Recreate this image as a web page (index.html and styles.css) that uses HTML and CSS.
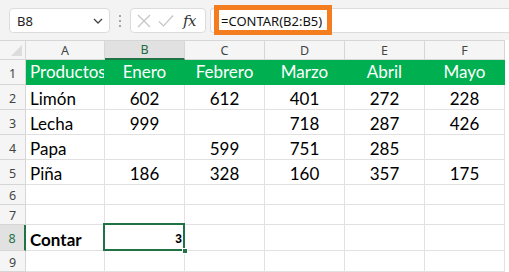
FILE: index.html
```html
<!DOCTYPE html>
<html lang="es">
<head>
<meta charset="utf-8">
<title>CONTAR</title>
<link rel="stylesheet" href="styles.css">
</head>
<body>
<div class="toolbar">
  <div class="namebox">
    <span class="name">B8</span>
    <svg class="chev" width="10" height="6" viewBox="0 0 10 6"><path d="M1 1 L5 5 L9 1" fill="none" stroke="#444" stroke-width="1.3"/></svg>
  </div>
  <div class="dots"><span></span><span></span><span></span></div>
  <div class="fxbox">
    <svg width="14" height="14" viewBox="0 0 14 14"><path d="M1 1 L13 13 M13 1 L1 13" stroke="#c4c4c4" stroke-width="1.2" fill="none"/></svg>
    <svg width="16" height="14" viewBox="0 0 16 14"><path d="M1 7.5 L5.5 12 L15 1.5" stroke="#c4c4c4" stroke-width="1.2" fill="none"/></svg>
    <span class="fx">fx</span>
  </div>
  <div class="formula">
    <span class="ftext">=CONTAR(B2:B5)</span>
    <span class="highlight"></span>
  </div>
</div>
<div class="sheet">
  <div class="corner"></div>
  <div class="ch">A</div>
  <div class="ch sel">B</div>
  <div class="ch">C</div>
  <div class="ch">D</div>
  <div class="ch">E</div>
  <div class="ch">F</div>

  <div class="rh">1</div>
  <div class="c hd left">Productos</div>
  <div class="c hd">Enero</div>
  <div class="c hd">Febrero</div>
  <div class="c hd">Marzo</div>
  <div class="c hd">Abril</div>
  <div class="c hd">Mayo</div>

  <div class="rh">2</div>
  <div class="c left">Limón</div>
  <div class="c">602</div>
  <div class="c">612</div>
  <div class="c">401</div>
  <div class="c">272</div>
  <div class="c">228</div>

  <div class="rh">3</div>
  <div class="c left">Lecha</div>
  <div class="c">999</div>
  <div class="c"></div>
  <div class="c">718</div>
  <div class="c">287</div>
  <div class="c">426</div>

  <div class="rh">4</div>
  <div class="c left">Papa</div>
  <div class="c"></div>
  <div class="c">599</div>
  <div class="c">751</div>
  <div class="c">285</div>
  <div class="c"></div>

  <div class="rh">5</div>
  <div class="c left">Piña</div>
  <div class="c">186</div>
  <div class="c">328</div>
  <div class="c">160</div>
  <div class="c">357</div>
  <div class="c">175</div>

  <div class="rh">6</div>
  <div class="c"></div><div class="c"></div><div class="c"></div><div class="c"></div><div class="c"></div><div class="c"></div>

  <div class="rh">7</div>
  <div class="c"></div><div class="c"></div><div class="c"></div><div class="c"></div><div class="c"></div><div class="c"></div>

  <div class="rh sel">8</div>
  <div class="c left bold">Contar</div>
  <div class="c active"><span class="res">3</span></div>
  <div class="c"></div><div class="c"></div><div class="c"></div><div class="c"></div>

  <div class="rh">9</div>
  <div class="c"></div><div class="c"></div><div class="c"></div><div class="c"></div><div class="c"></div><div class="c"></div>
</div>
</body>
</html>
```
FILE: styles.css
```css
html, body {
  margin: 0;
  padding: 0;
}
body {
  width: 509px;
  height: 272px;
  overflow: hidden;
  background: #f3f3f3;
  font-family: "Noto Sans", "Open Sans", sans-serif;
}
.toolbar {
  display: flex;
  align-items: flex-start;
  height: 40px;
  box-sizing: border-box;
  padding: 8px 0 0 9px;
}
.namebox {
  width: 101px;
  height: 25px;
  box-sizing: border-box;
  background: #fff;
  border: 1px solid #dcdcdc;
  border-radius: 4px;
  display: flex;
  align-items: center;
  justify-content: space-between;
  padding: 0 6px 0 7px;
}
.name {
  font-size: 13px;
  color: #222;
}
.chev {
  margin-top: 1px;
}
.dots {
  width: 20px;
  height: 25px;
  display: flex;
  flex-direction: column;
  align-items: center;
  justify-content: center;
  gap: 3px;
}
.dots span {
  width: 2px;
  height: 2px;
  background: #8a8a8a;
  border-radius: 1px;
}
.fxbox {
  width: 76px;
  height: 25px;
  box-sizing: border-box;
  background: #fff;
  border: 1px solid #dcdcdc;
  border-radius: 4px;
  display: flex;
  align-items: center;
  padding-left: 6px;
  gap: 7px;
}
.fx {
  font-family: "DejaVu Serif", "Liberation Serif", serif;
  font-style: italic;
  font-size: 15px;
  color: #333;
  margin-left: 2px;
  letter-spacing: -0.5px;
}
.formula {
  position: relative;
  margin-left: 4px;
  flex: 1;
  height: 25px;
  box-sizing: border-box;
  background: #fff;
  border: 1px solid #dcdcdc;
  border-right: none;
  border-radius: 4px 0 0 4px;
  display: flex;
  align-items: center;
  padding-left: 10px;
}
.ftext {
  font-size: 13px;
  color: #111;
}
.highlight {
  position: absolute;
  left: 3px;
  top: -4px;
  width: 118px;
  height: 30px;
  box-sizing: border-box;
  border: 5px solid #f47d20;
}
.sheet {
  display: grid;
  grid-template-columns: 26px 79px 80px 80px 80px 80px 80px;
  grid-template-rows: 20px 25px 25px 25px 25px 25px 20px 20px 26px 21px;
  background: #fff;
  width: 509px;
}
.corner, .ch, .rh {
  box-sizing: border-box;
  background: #f5f5f5;
  color: #444;
  font-size: 12.5px;
  border-right: 1px solid #d6d6d6;
  border-bottom: 1px solid #d6d6d6;
  display: flex;
  align-items: center;
  justify-content: center;
}
.ch {
  border-top: 1px solid #d6d6d6;
}
.corner {
  border-top: 1px solid #d6d6d6;
  position: relative;
}
.corner::after {
  content: "";
  position: absolute;
  right: 3px;
  bottom: 3px;
  width: 0;
  height: 0;
  border-left: 11px solid transparent;
  border-bottom: 11px solid #dcdcdc;
}
.ch.sel {
  background: #e1e1e1;
  color: #1e6b40;
  border-bottom: 2px solid #217346;
}
.rh {
  padding-top: 2px;
}
.rh.sel {
  background: #e1e1e1;
  color: #217346;
  border-right: 2px solid #217346;
}
.c {
  box-sizing: border-box;
  border-right: 1px solid #e1e1e1;
  border-bottom: 1px solid #e1e1e1;
  font-family: Lato, "Noto Sans", sans-serif;
  font-size: 17px;
  line-height: 20px;
  color: #000;
  display: flex;
  align-items: flex-end;
  justify-content: center;
  white-space: nowrap;
  overflow: hidden;
}
.c.left {
  justify-content: flex-start;
  padding-left: 4px;
}
.c.hd {
  background: #00b050;
  border-color: #00b050;
  color: #fff;
  padding-bottom: 2px;
}
.c.bold {
  font-weight: bold;
}
.c.active {
  position: relative;
  overflow: visible;
  justify-content: flex-end;
}
.c.active::before {
  content: "";
  position: absolute;
  left: -2px;
  top: -2px;
  right: -1px;
  bottom: -1px;
  border: 2px solid #217346;
}
.c.active::after {
  content: "";
  position: absolute;
  right: -4px;
  bottom: -4px;
  width: 6px;
  height: 6px;
  background: #217346;
  border: 1px solid #fff;
  box-sizing: border-box;
}
.res {
  font-family: "Liberation Sans", sans-serif;
  font-weight: bold;
  font-size: 12px;
  line-height: 14px;
  padding-right: 2px;
  padding-bottom: 4px;
}
```
